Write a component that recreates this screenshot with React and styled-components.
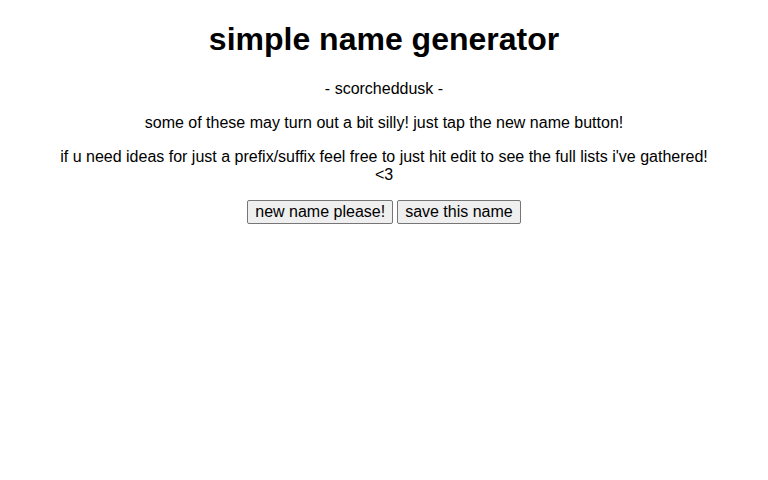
import React, { useState } from 'react';
import styled, { createGlobalStyle } from 'styled-components';

const GlobalStyle = createGlobalStyle`
  body {
    margin: 0 8px;
    background: #fff;
    color: #000;
    font-family: "Liberation Sans", Arial, sans-serif;
  }
`;

const Page = styled.div`
  text-align: center;
`;

const Title = styled.h1`
  font-size: 32px;
  font-weight: bold;
  margin: 21.44px 0;
`;

const Text = styled.p`
  font-size: 16px;
  margin: 16px 0;
`;

const Actions = styled.div`
  display: flex;
  justify-content: center;
  gap: 4px;
`;

const Button = styled.button`
  font-family: "Liberation Sans", Arial, sans-serif;
  font-size: 16px;
  color: #000;
  background: #efefef;
  border: 1px solid #767676;
  border-radius: 2px;
  padding: 2px 7px;
  line-height: 18px;
  cursor: pointer;

  &:hover {
    background: #e5e5e5;
  }
`;

const prefixes = ['scorched', 'ember', 'hollow', 'frost', 'moss', 'silver'];
const suffixes = ['dusk', 'fang', 'whisker', 'tail', 'leaf', 'heart'];

const pick = list => list[Math.floor(Math.random() * list.length)];

const App = () => {
  const [name, setName] = useState('scorcheddusk');
  const [saved, setSaved] = useState([]);

  const handleNew = () => setName(pick(prefixes) + pick(suffixes));
  const handleSave = () => setSaved([...saved, name]);

  return (
    <Page>
      <GlobalStyle />
      <Title>simple name generator</Title>
      <Text>- {name} -</Text>
      <Text>some of these may turn out a bit silly! just tap the new name button!</Text>
      <Text>
        if u need ideas for just a prefix/suffix feel free to just hit edit to see the full lists i've gathered!
        <br />
        &lt;3
      </Text>
      <Actions>
        <Button onClick={handleNew}>new name please!</Button>
        <Button onClick={handleSave}>save this name</Button>
      </Actions>
    </Page>
  );
};

export default App;
